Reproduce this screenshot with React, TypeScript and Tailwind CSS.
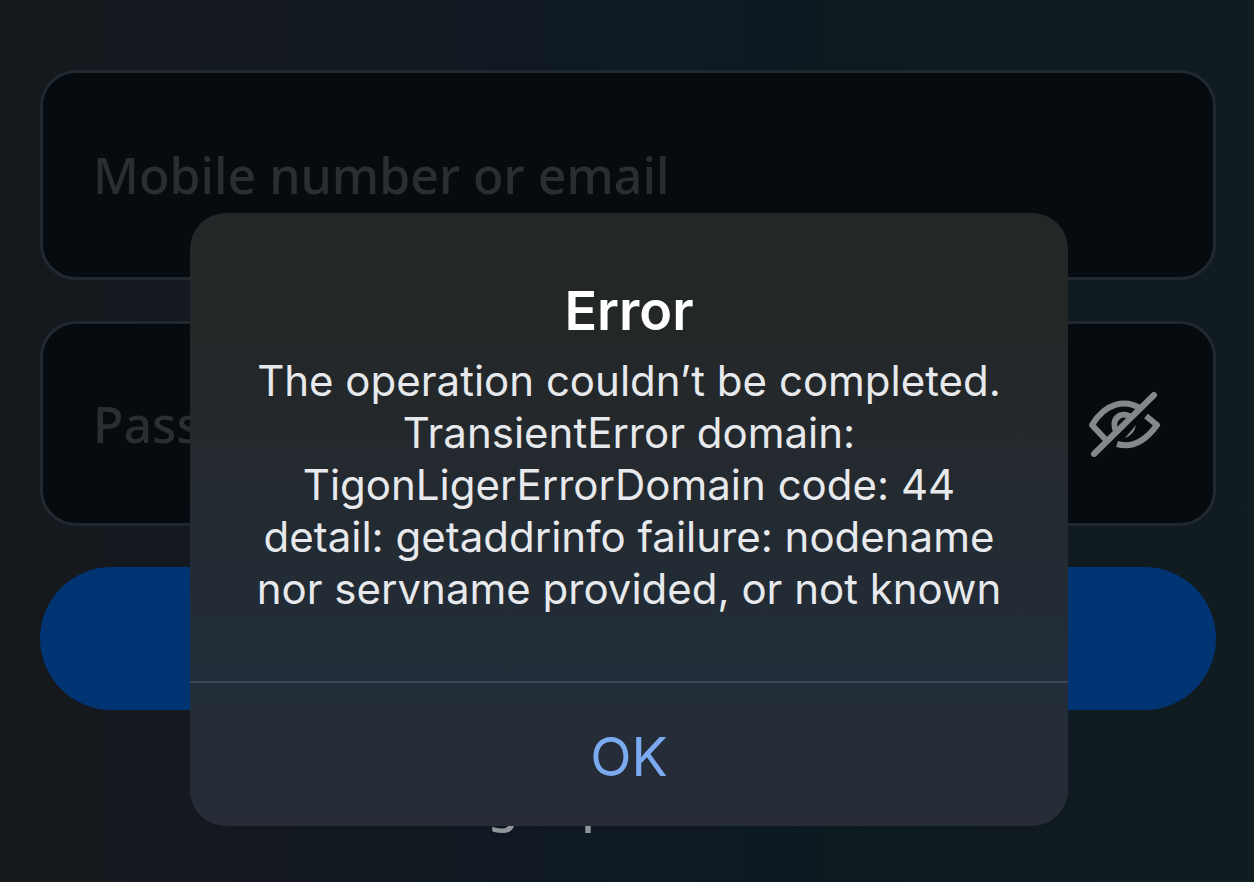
import React, { useState } from "react";

const fieldClass =
  "flex items-center rounded-[36px] border-[3px] border-[#20292f] bg-[#060b0f] pl-[50px] pr-[51px]";
const inputClass =
  "w-full min-w-0 bg-transparent font-['Noto_Sans',sans-serif] text-[50px] leading-[60px] font-medium text-[#b4babf] outline-none placeholder:text-[#2a2e30]";

const EyeOffIcon: React.FC = () => (
  <svg viewBox="0 0 74 66" className="h-[66px] w-[74px]" fill="none" stroke="#84888c" strokeWidth="6">
    <path d="M18 49L4 34C18 11 38 8 53 18" strokeLinejoin="round" />
    <path d="M58 25L69 34C56 52 43 57 29 53" strokeLinejoin="round" />
    <path d="M29 42C21 29 33 18 44 27" strokeWidth="6" />
    <path d="M37 47Q46 44 48 34Z" fill="#84888c" stroke="none" />
    <path d="M6 63L66 4" strokeLinecap="round" />
  </svg>
);

interface ErrorDialogProps {
  title: string;
  lines: string[];
  onClose: () => void;
}

const ErrorDialog: React.FC<ErrorDialogProps> = ({ title, lines, onClose }) => {
  return (
    <div className="absolute inset-x-0 top-[213px] flex justify-center pl-[4px]">
      <div
        role="alertdialog"
        aria-labelledby="error-title"
        aria-describedby="error-message"
        className="w-[878px] max-w-full overflow-hidden rounded-[36px] bg-linear-to-b from-[#242728] from-20% via-[#222d39] via-75% to-[#272c36] font-[Inter,sans-serif]"
      >
        <div className="px-10 pt-[66px] pb-[66px] text-center">
          <h1 id="error-title" className="text-[54px] leading-[64px] font-semibold text-white">
            {title}
          </h1>
          <p id="error-message" className="mt-3 text-[42px] leading-[52px] text-[#e7e9ec]">
            {lines.map((line) => (
              <span key={line} className="block whitespace-nowrap">
                {line}
              </span>
            ))}
          </p>
        </div>
        <button
          type="button"
          onClick={onClose}
          className="h-[145px] w-full border-t-2 border-[#3b4554] pt-1 text-[54px] leading-[64px] text-[#7baaf0]"
        >
          OK
        </button>
      </div>
    </div>
  );
};

const App: React.FC = () => {
  const [open, setOpen] = useState(true);
  const [showPassword, setShowPassword] = useState(false);

  return (
    <main className="relative min-h-screen overflow-hidden bg-[linear-gradient(to_right,#16191b,#15181f_12%,#0f1922_45%,#0d1a20_70%,#111c20)] pt-[70px] pr-[38px] pl-10">
      <form className="flex flex-col gap-[41px]" onSubmit={(e) => e.preventDefault()}>
        <div className={`${fieldClass} h-[210px]`}>
          <input type="text" aria-label="Mobile number or email" placeholder="Mobile number or email" className={inputClass} />
        </div>
        <div className={`${fieldClass} h-[205px]`}>
          <input
            type={showPassword ? "text" : "password"}
            aria-label="Password"
            placeholder="Password"
            className={inputClass}
          />
          <button type="button" aria-label="Show password" onClick={() => setShowPassword(!showPassword)}>
            <EyeOffIcon />
          </button>
        </div>
        <button type="submit" aria-label="Log in" className="h-[143px] rounded-full bg-[#003473]" />
      </form>
      <div className="mt-[62px] pr-3 text-center">
        <a href="#forgot" className="font-['Noto_Sans',sans-serif] text-[50px] leading-[60px] font-medium text-[#90959a]">
          Forgot password?
        </a>
      </div>
      {open && (
        <ErrorDialog
          title="Error"
          lines={[
            "The operation couldn’t be completed.",
            "TransientError domain:",
            "TigonLigerErrorDomain code: 44",
            "detail: getaddrinfo failure: nodename",
            "nor servname provided, or not known",
          ]}
          onClose={() => setOpen(false)}
        />
      )}
    </main>
  );
};

export default App;
